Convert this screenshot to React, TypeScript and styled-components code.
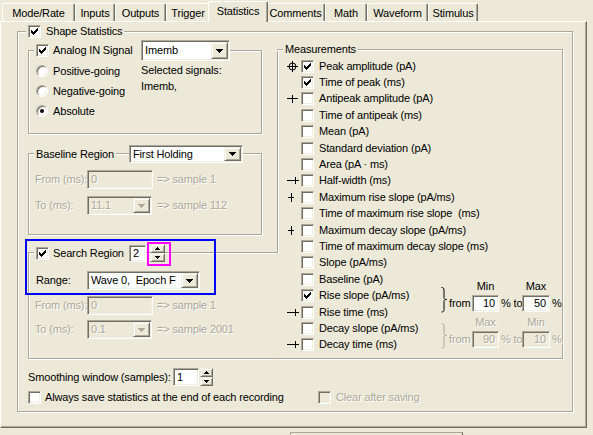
import React from "react";
import styled, { createGlobalStyle, css } from "styled-components";

const GlobalStyle = createGlobalStyle`
  * { box-sizing: border-box; }
  html, body { margin: 0; padding: 0; background: #ece9d8; }
  body {
    font-family: "Liberation Sans", Arial, sans-serif;
    font-size: 11px;
    line-height: 13px;
    letter-spacing: -0.15px;
    color: #000;
  }
`;

const etched = css`
  border: 1px solid #aca899;
  box-shadow: inset 1px 1px 0 #fff, 1px 1px 0 #fff;
`;

const sunken = css`
  border: 1px solid;
  border-color: #aca899 #fff #fff #aca899;
  box-shadow: inset 1px 1px 0 #716f64, inset -1px -1px 0 #f1efe2;
`;

const raised = css`
  border: 1px solid;
  border-color: #f1efe2 #716f64 #716f64 #f1efe2;
  box-shadow: inset 1px 1px 0 #fff, inset -1px -1px 0 #aca899;
  background: #ece9d8;
`;

const Window = styled.div`
  width: 593px;
  height: 435px;
  overflow: hidden;
  background: #ece9d8;
`;

const TabStrip = styled.div`
  display: flex;
  align-items: flex-end;
  height: 21px;
  padding-left: 2px;
`;

const Tab = styled.div<{ $w: number; $active?: boolean }>`
  position: relative;
  z-index: ${(p) => (p.$active ? 2 : 1)};
  display: flex;
  align-items: center;
  justify-content: center;
  flex-shrink: 0;
  width: ${(p) => p.$w}px;
  height: ${(p) => (p.$active ? 21 : 18)}px;
  margin: ${(p) => (p.$active ? "0 -2px -1px" : "0")};
  padding: ${(p) => (p.$active ? "0 0 2px" : "1px 0 0")};
  background: #ece9d8;
  border-top: 1px solid #fff;
  border-left: 1px solid #fff;
  border-right: 1px solid #716f64;
  border-radius: 2px 2px 0 0;
  box-shadow: inset -1px 0 0 #aca899;
  white-space: nowrap;
`;

const Panel = styled.div`
  width: 587px;
  height: 407px;
  border-top: 1px solid #fff;
  border-left: 1px solid #fff;
  border-right: 1px solid #716f64;
  border-bottom: 1px solid #716f64;
  box-shadow: inset -1px -1px 0 #aca899;
  padding: 9px 0 0 16px;
`;

const Footer = styled.div`
  width: 173px;
  height: 3px;
  margin: 4px 0 0 290px;
  border-top: 1px solid #aca899;
  border-left: 1px solid #aca899;
  border-right: 1px solid #716f64;
`;

const ShapeGroup = styled.div`
  ${etched}
  width: 556px;
  height: 381px;
  padding: 0 9px 0 10px;
  display: flex;
  flex-direction: column;
`;

const Legend = styled.div<{ $mt: number; $ml: number; $h: number }>`
  display: flex;
  align-items: center;
  flex-shrink: 0;
  width: max-content;
  height: ${(p) => p.$h}px;
  margin: ${(p) => -p.$mt}px 0 0 ${(p) => p.$ml}px;
`;

const LegendPart = styled.div<{ $gap?: number }>`
  display: flex;
  align-items: center;
  gap: ${(p) => p.$gap ?? 4}px;
  height: 100%;
  padding: 0 2px;
  background: #ece9d8;
`;

const Columns = styled.div`
  display: flex;
  height: 310px;
  margin-top: 11px;
  flex-shrink: 0;
`;

const LeftCol = styled.div`
  display: flex;
  flex-direction: column;
  width: 249px;
  flex-shrink: 0;
`;

const GroupBox = styled.div<{ $w: number; $h: number; $mt: number }>`
  ${etched}
  width: ${(p) => p.$w}px;
  height: ${(p) => p.$h}px;
  margin-top: ${(p) => p.$mt}px;
  display: flex;
  flex-direction: column;
  flex-shrink: 0;
`;

/* its right side is closed by the measurements frame */
const SearchBox = styled(GroupBox)`
  position: relative;
  border-right: none;
  box-shadow: inset 1px 1px 0 #fff, 0 1px 0 #fff;
`;

const Highlight = styled.div<{ $color: string; $x: number; $y: number; $w: number; $h: number }>`
  position: absolute;
  left: ${(p) => p.$x}px;
  top: ${(p) => p.$y}px;
  width: ${(p) => p.$w}px;
  height: ${(p) => p.$h}px;
  border: 2px solid ${(p) => p.$color};
  pointer-events: none;
`;

const Measurements = styled.div`
  width: 286px;
  height: 310px;
  flex-shrink: 0;
  display: flex;
  flex-direction: column;
  border: 1px solid #aca899;
  border-left: none;
  box-shadow: inset 0 1px 0 #fff, 1px 1px 0 #fff;
  background-image: linear-gradient(#aca899, #aca899), linear-gradient(#fff, #fff);
  background-size: 1px 204px, 1px 203px;
  background-position: 0 0, 1px 1px;
  background-origin: border-box;
  background-repeat: no-repeat;
`;

const MeasureList = styled.div`
  margin-top: 2px;
`;

const MRow = styled.div`
  display: flex;
  align-items: center;
  height: 16.4px;
  padding-left: 9px;
`;

const MarkSlot = styled.span`
  display: flex;
  width: 14px;
  height: 13px;
  margin-right: 1px;
  flex-shrink: 0;
`;

const MLabel = styled.span`
  margin-left: 5px;
  white-space: pre;
`;

const RangeBlock = styled.div`
  display: flex;
  align-items: flex-start;
`;

const RangeRows = styled.div`
  width: 164px;
  flex-shrink: 0;
`;

const RangeCtl = styled.div<{ $shift: number }>`
  display: flex;
  align-items: flex-end;
  margin-top: ${(p) => -p.$shift}px;
`;

const BraceSvg = styled.svg`
  display: block;
  flex-shrink: 0;
  margin-bottom: -1px;
`;

const ValueCol = styled.div<{ $w: number }>`
  display: flex;
  flex-direction: column;
  align-items: center;
  width: ${(p) => p.$w}px;
  flex-shrink: 0;
`;

const Text = styled.span<{ $disabled?: boolean; $w?: number; $ml?: number; $lh?: number }>`
  white-space: pre;
  color: ${(p) => (p.$disabled ? "#aca899" : "#000")};
  text-shadow: ${(p) => (p.$disabled ? "1px 1px 0 #fff" : "none")};
  margin-left: ${(p) => p.$ml ?? 0}px;
  ${(p) => (p.$w ? `width: ${p.$w}px; flex-shrink: 0;` : "")}
  ${(p) => (p.$lh ? `line-height: ${p.$lh}px;` : "")}
`;

const ValueCap = styled(Text)`
  line-height: 12px;
  margin-bottom: 3px;
`;

const CheckFrame = styled.span<{ $disabled?: boolean }>`
  ${sunken}
  display: inline-flex;
  align-items: center;
  justify-content: center;
  width: 13px;
  height: 13px;
  flex-shrink: 0;
  background: ${(p) => (p.$disabled ? "#ece9d8" : "#fff")};
`;

const RadioFrame = styled.span`
  display: inline-flex;
  align-items: center;
  justify-content: center;
  width: 12px;
  height: 12px;
  flex-shrink: 0;
  border-radius: 50%;
  border: 1px solid;
  border-color: #aca899 #fff #fff #aca899;
  box-shadow: inset 1px 1px 0 #716f64, inset -1px -1px 0 #f1efe2;
  background: #fff;
`;

const RadioDot = styled.span`
  width: 4px;
  height: 4px;
  border-radius: 50%;
  background: #000;
`;

const ComboFrame = styled.div<{ $w: number; $h: number; $disabled?: boolean }>`
  ${sunken}
  display: flex;
  flex-shrink: 0;
  width: ${(p) => p.$w}px;
  height: ${(p) => p.$h}px;
  padding: 1px;
  background: ${(p) => (p.$disabled ? "#ece9d8" : "#fff")};
`;

const ComboText = styled.span<{ $disabled?: boolean }>`
  flex: 1;
  display: flex;
  align-items: center;
  overflow: hidden;
  white-space: pre;
  padding-left: 2px;
  color: ${(p) => (p.$disabled ? "#aca899" : "#000")};
  text-shadow: ${(p) => (p.$disabled ? "1px 1px 0 #fff" : "none")};
`;

const DropButton = styled.span`
  ${raised}
  display: flex;
  align-items: center;
  justify-content: center;
  width: 17px;
  flex-shrink: 0;
`;

const EditBox = styled.div<{ $w: number; $h: number; $disabled?: boolean; $right?: boolean }>`
  ${sunken}
  display: flex;
  align-items: center;
  justify-content: ${(p) => (p.$right ? "flex-end" : "flex-start")};
  flex-shrink: 0;
  width: ${(p) => p.$w}px;
  height: ${(p) => p.$h}px;
  padding: 0 3px;
  background: ${(p) => (p.$disabled ? "#ece9d8" : "#fff")};
  color: ${(p) => (p.$disabled ? "#aca899" : "#000")};
  text-shadow: ${(p) => (p.$disabled ? "1px 1px 0 #fff" : "none")};
`;

const Spin = styled.div<{ $w: number; $h: number; $ml: number }>`
  display: flex;
  flex-direction: column;
  flex-shrink: 0;
  width: ${(p) => p.$w}px;
  height: ${(p) => p.$h}px;
  margin-left: ${(p) => p.$ml}px;
`;

const SpinHalf = styled.span`
  ${raised}
  flex: 1;
  display: flex;
  align-items: center;
  justify-content: center;
`;

const AnalogBody = styled.div`
  display: flex;
`;

const RadioCol = styled.div`
  width: 112px;
  padding-left: 7px;
  flex-shrink: 0;
`;

const RadioRow = styled.div`
  display: flex;
  align-items: center;
  gap: 5px;
  height: 20px;
`;

const Signals = styled.div`
  padding-top: 1px;
  line-height: 16px;
`;

const FieldRow = styled.div<{ $mt: number }>`
  display: flex;
  align-items: center;
  height: 19px;
  margin-top: ${(p) => p.$mt}px;
`;

const SmoothRow = styled.div`
  display: flex;
  align-items: center;
  height: 18px;
  margin-top: 9px;
`;

const OptionRow = styled.div`
  display: flex;
  align-items: center;
  height: 13px;
  margin-top: 5px;
`;

const OptionItem = styled.div<{ $w?: number }>`
  display: flex;
  align-items: center;
  gap: 4px;
  ${(p) => (p.$w ? `width: ${p.$w}px; flex-shrink: 0;` : "")}
`;

/* small widgets */

const CheckBox: React.FC<{ checked?: boolean; disabled?: boolean }> = ({ checked, disabled }) => (
  <CheckFrame $disabled={disabled}>
    {checked && (
      <svg width="7" height="7" viewBox="0 0 7 7" shapeRendering="crispEdges">
        <path
          d="M6 0h1v1h-1zM5 1h2v1h-2zM0 2h1v1h-1zM4 2h3v1h-3zM0 3h2v1h-2zM3 3h3v1h-3zM0 4h5v1h-5zM1 5h3v1h-3zM2 6h1v1h-1z"
          fill={disabled ? "#aca899" : "#000"}
        />
      </svg>
    )}
  </CheckFrame>
);

const Radio: React.FC<{ on?: boolean }> = ({ on }) => <RadioFrame>{on && <RadioDot />}</RadioFrame>;

const DownArrow: React.FC<{ disabled?: boolean }> = ({ disabled }) => (
  <svg width="7" height="4" viewBox="0 0 7 4" shapeRendering="crispEdges">
    <path d="M0 0h7v1h-1v1h-1v1h-1v1h-1v-1h-1v-1h-1v-1h-1z" fill={disabled ? "#aca899" : "#000"} />
  </svg>
);

const Combo: React.FC<{ w: number; h: number; value: string; disabled?: boolean }> = ({ w, h, value, disabled }) => (
  <ComboFrame $w={w} $h={h} $disabled={disabled}>
    <ComboText $disabled={disabled}>{value}</ComboText>
    <DropButton>
      <DownArrow disabled={disabled} />
    </DropButton>
  </ComboFrame>
);

const SpinButtons: React.FC<{ w: number; h: number; ml: number }> = ({ w, h, ml }) => (
  <Spin $w={w} $h={h} $ml={ml}>
    <SpinHalf>
      <svg width="5" height="3" viewBox="0 0 5 3" shapeRendering="crispEdges">
        <path d="M2 0h1v1h1v1h1v1h-5v-1h1v-1h1z" fill="#000" />
      </svg>
    </SpinHalf>
    <SpinHalf>
      <svg width="5" height="3" viewBox="0 0 5 3" shapeRendering="crispEdges">
        <path d="M0 0h5v1h-1v1h-1v1h-1v-1h-1v-1h-1z" fill="#000" />
      </svg>
    </SpinHalf>
  </Spin>
);

type MarkKind = "cross" | "plus" | "tick" | "small";

const Marker: React.FC<{ kind?: MarkKind }> = ({ kind }) => (
  <MarkSlot>
    {kind && (
      <svg width="14" height="13" viewBox="0 0 14 13" fill="none" stroke="#000" strokeWidth="1">
        {kind === "cross" && (
          <>
            <circle cx="6.5" cy="6.5" r="3.5" />
            <path d="M1 6.5h11M6.5 1v11" shapeRendering="crispEdges" />
          </>
        )}
        {kind === "plus" && <path d="M1 6.5h11M6.5 2.5v8" shapeRendering="crispEdges" />}
        {kind === "tick" && <path d="M1 6.5h12M9.5 3v7" shapeRendering="crispEdges" />}
        {kind === "small" && <path d="M2 6.5h6M5.5 2v9" shapeRendering="crispEdges" />}
      </svg>
    )}
  </MarkSlot>
);

const Brace: React.FC<{ disabled?: boolean }> = ({ disabled }) => (
  <BraceSvg width="6" height="26" viewBox="0 0 6 26" fill="none" stroke={disabled ? "#aca899" : "#000"}>
    <path d="M0.5 0.5C2.5 0.5 3 1.5 3 3V10.5C3 12 4 12.5 5.5 12.5C4 12.5 3 13 3 14.5V22.5C3 24 2.5 25 0.5 25" />
  </BraceSvg>
);

interface Measure {
  label: string;
  mark?: MarkKind;
  checked?: boolean;
}

const MeasureItem: React.FC<{ m: Measure }> = ({ m }) => (
  <MRow>
    <Marker kind={m.mark} />
    <CheckBox checked={m.checked} />
    <MLabel>{m.label}</MLabel>
  </MRow>
);

const tabs = [
  { name: "Mode/Rate", w: 73 },
  { name: "Inputs", w: 40 },
  { name: "Outputs", w: 51 },
  { name: "Trigger", w: 44 },
  { name: "Statistics", w: 60, active: true },
  { name: "Comments", w: 59 },
  { name: "Math", w: 42 },
  { name: "Waveform", w: 61 },
  { name: "Stimulus", w: 50 },
];

const measures: Measure[] = [
  { label: "Peak amplitude (pA)", mark: "cross", checked: true },
  { label: "Time of peak (ms)", checked: true },
  { label: "Antipeak amplitude (pA)", mark: "plus" },
  { label: "Time of antipeak (ms)" },
  { label: "Mean (pA)" },
  { label: "Standard deviation (pA)" },
  { label: "Area (pA · ms)" },
  { label: "Half-width (ms)", mark: "tick" },
  { label: "Maximum rise slope (pA/ms)", mark: "small" },
  { label: "Time of maximum rise slope  (ms)" },
  { label: "Maximum decay slope (pA/ms)", mark: "small" },
  { label: "Time of maximum decay slope (ms)" },
  { label: "Slope (pA/ms)" },
  { label: "Baseline (pA)" },
];

const ranges = [
  {
    rows: [
      { label: "Rise slope (pA/ms)", checked: true },
      { label: "Rise time (ms)", mark: "tick" as MarkKind },
    ],
    caps: ["Min", "Max"],
    values: ["10", "50"],
    enabled: true,
    shift: 7,
  },
  {
    rows: [{ label: "Decay slope (pA/ms)" }, { label: "Decay time (ms)", mark: "tick" as MarkKind }],
    caps: ["Max", "Min"],
    values: ["90", "10"],
    enabled: false,
    shift: 4,
  },
];

const App: React.FC = () => {
  return (
    <Window>
      <GlobalStyle />
      <TabStrip>
        {tabs.map((t) => (
          <Tab key={t.name} $w={t.w} $active={t.active}>
            {t.name}
          </Tab>
        ))}
      </TabStrip>

      <Panel>
        <ShapeGroup>
          <Legend $mt={7} $ml={-2} $h={13}>
            <LegendPart $gap={5}>
              <CheckBox checked />
              <span>Shape Statistics</span>
            </LegendPart>
          </Legend>

          <Columns>
            <LeftCol>
              <GroupBox $w={234} $h={84} $mt={1}>
                <Legend $mt={11} $ml={5} $h={21}>
                  <LegendPart>
                    <CheckBox checked />
                    <Text $w={86}>Analog IN Signal</Text>
                  </LegendPart>
                  <Combo w={89} h={21} value="Imemb" />
                </Legend>
                <AnalogBody>
                  <RadioCol>
                    <RadioRow>
                      <Radio />
                      <span>Positive-going</span>
                    </RadioRow>
                    <RadioRow>
                      <Radio />
                      <span>Negative-going</span>
                    </RadioRow>
                    <RadioRow>
                      <Radio on />
                      <span>Absolute</span>
                    </RadioRow>
                  </RadioCol>
                  <Signals>
                    Selected signals:
                    <br />
                    Imemb,
                  </Signals>
                </AnalogBody>
              </GroupBox>

              <GroupBox $w={234} $h={82} $mt={19}>
                <Legend $mt={9} $ml={5} $h={18}>
                  <LegendPart>
                    <Text $w={78}>Baseline Region</Text>
                  </LegendPart>
                  <Text $ml={13} />
                  <Combo w={114} h={18} value="First Holding" />
                </Legend>
                <FieldRow $mt={7}>
                  <Text $disabled $ml={6} $w={52}>
                    From (ms):
                  </Text>
                  <EditBox $w={66} $h={19} $disabled>
                    0
                  </EditBox>
                  <Text $disabled $ml={4}>
                    =&gt; sample 1
                  </Text>
                </FieldRow>
                <FieldRow $mt={7}>
                  <Text $disabled $ml={6} $w={52}>
                    To (ms):
                  </Text>
                  <Combo w={65} h={19} value="11.1" disabled />
                  <Text $disabled $ml={5}>
                    =&gt; sample 112
                  </Text>
                </FieldRow>
              </GroupBox>

              <SearchBox $w={249} $h={107} $mt={17}>
                <Legend $mt={9} $ml={5} $h={18}>
                  <LegendPart>
                    <CheckBox checked />
                    <Text $w={74}>Search Region</Text>
                  </LegendPart>
                  <EditBox $w={17} $h={17}>
                    2
                  </EditBox>
                  <SpinButtons w={15} h={18} ml={4} />
                </Legend>
                <FieldRow $mt={9}>
                  <Text $ml={7} $w={51}>
                    Range:
                  </Text>
                  <Combo w={113} h={19} value="Wave 0,  Epoch F" />
                </FieldRow>
                <FieldRow $mt={6}>
                  <Text $disabled $ml={6} $w={52}>
                    From (ms):
                  </Text>
                  <EditBox $w={66} $h={19} $disabled>
                    0
                  </EditBox>
                  <Text $disabled $ml={4}>
                    =&gt; sample 1
                  </Text>
                </FieldRow>
                <FieldRow $mt={5}>
                  <Text $disabled $ml={6} $w={52}>
                    To (ms):
                  </Text>
                  <Combo w={65} h={19} value="0.1" disabled />
                  <Text $disabled $ml={5}>
                    =&gt; sample 2001
                  </Text>
                </FieldRow>
                <Highlight $color="#0000ff" $x={-4} $y={-14} $w={191} $h={56} />
                <Highlight $color="#ff00ff" $x={118} $y={-11} $w={24} $h={24} />
              </SearchBox>
            </LeftCol>

            <Measurements>
              <Legend $mt={7} $ml={6} $h={13}>
                <LegendPart>Measurements</LegendPart>
              </Legend>
              <MeasureList>
                {measures.map((m) => (
                  <MeasureItem key={m.label} m={m} />
                ))}
                {ranges.map((r) => (
                  <RangeBlock key={r.rows[0].label}>
                    <RangeRows>
                      {r.rows.map((m) => (
                        <MeasureItem key={m.label} m={m} />
                      ))}
                    </RangeRows>
                    <RangeCtl $shift={r.shift}>
                      <Brace disabled={!r.enabled} />
                      <Text $disabled={!r.enabled} $ml={2} $w={23} $lh={17}>
                        from
                      </Text>
                      <ValueCol $w={27}>
                        <ValueCap $disabled={!r.enabled}>{r.caps[0]}</ValueCap>
                        <EditBox $w={27} $h={17} $right $disabled={!r.enabled}>
                          {r.values[0]}
                        </EditBox>
                      </ValueCol>
                      <Text $disabled={!r.enabled} $ml={2} $w={21} $lh={17}>
                        % to
                      </Text>
                      <ValueCol $w={28}>
                        <ValueCap $disabled={!r.enabled}>{r.caps[1]}</ValueCap>
                        <EditBox $w={28} $h={17} $right $disabled={!r.enabled}>
                          {r.values[1]}
                        </EditBox>
                      </ValueCol>
                      <Text $disabled={!r.enabled} $ml={2} $lh={17}>
                        %
                      </Text>
                    </RangeCtl>
                  </RangeBlock>
                ))}
              </MeasureList>
            </Measurements>
          </Columns>

          <SmoothRow>
            <Text $w={145}>Smoothing window (samples):</Text>
            <EditBox $w={26} $h={18}>
              1
            </EditBox>
            <SpinButtons w={13} h={18} ml={1} />
          </SmoothRow>

          <OptionRow>
            <OptionItem $w={290}>
              <CheckBox />
              <span>Always save statistics at the end of each recording</span>
            </OptionItem>
            <OptionItem>
              <CheckBox disabled />
              <Text $disabled $ml={1}>
                Clear after saving
              </Text>
            </OptionItem>
          </OptionRow>
        </ShapeGroup>
      </Panel>
      <Footer />
    </Window>
  );
};

export default App;
